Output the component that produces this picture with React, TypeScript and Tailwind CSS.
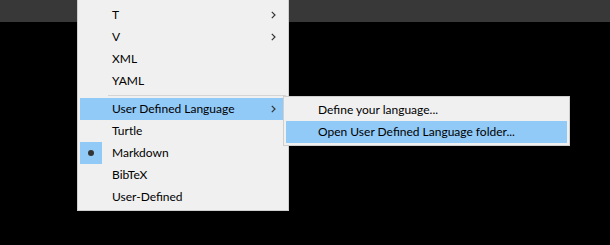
import React from 'react';

type Item =
  | { kind: 'item'; label: string; sub?: boolean; active?: boolean; checked?: boolean }
  | { kind: 'sep' };

const mainItems: Item[] = [
  { kind: 'item', label: 'T', sub: true },
  { kind: 'item', label: 'V', sub: true },
  { kind: 'item', label: 'XML' },
  { kind: 'item', label: 'YAML' },
  { kind: 'sep' },
  { kind: 'item', label: 'User Defined Language', sub: true, active: true },
  { kind: 'item', label: 'Turtle' },
  { kind: 'item', label: 'Markdown', checked: true },
  { kind: 'item', label: 'BibTeX' },
  { kind: 'item', label: 'User-Defined' },
];

const Chevron = () => (
  <svg width="5" height="8" viewBox="0 0 5 8" className="shrink-0">
    <path d="M0.8 0.8 L4 4 L0.8 7.2" fill="none" stroke="#333" strokeWidth="1.2" />
  </svg>
);

const Row: React.FC<{ label: string; sub?: boolean; active?: boolean; checked?: boolean }> = ({
  label,
  sub,
  active,
  checked,
}) => (
  <div className={`flex items-center h-[22px] ${active ? 'bg-[#91c9f7]' : ''}`}>
    <div className={`w-[22px] h-[22px] flex items-center justify-center shrink-0 ${checked ? 'bg-[#91c9f7]' : ''}`}>
      {checked && <div className="w-[6px] h-[6px] rounded-full bg-[#333]" />}
    </div>
    <span className="ml-[10px] flex-1 text-black whitespace-nowrap">{label}</span>
    {sub && (
      <div className="mr-[10px] flex items-center">
        <Chevron />
      </div>
    )}
  </div>
);

export default function App() {
  return (
    <div
      className="relative w-[610px] h-[245px] bg-black overflow-hidden text-[12px] leading-none"
      style={{ fontFamily: 'Lato, "Noto Sans", sans-serif' }}
    >
      <div className="h-[22px] bg-[#383838]" />

      {/* main menu */}
      <div className="absolute left-[77px] top-0 w-[212px] bg-[#f0f0f0] border-x border-b border-[#cfcfcf] px-[2px] pt-[4px] pb-[2px]">
        {mainItems.map((it, i) =>
          it.kind === 'sep' ? (
            <div key={i} className="h-[6px] flex items-center pl-[28px]">
              <div className="h-px w-full bg-[#d4d4d4]" />
            </div>
          ) : (
            <Row key={i} label={it.label} sub={it.sub} active={it.active} checked={it.checked} />
          )
        )}
      </div>

      {/* submenu */}
      <div className="absolute left-[283px] top-[96px] w-[287px] bg-[#f0f0f0] border border-[#cfcfcf] p-[2px]">
        <Row label="Define your language..." />
        <Row label="Open User Defined Language folder..." active />
      </div>
    </div>
  );
}
